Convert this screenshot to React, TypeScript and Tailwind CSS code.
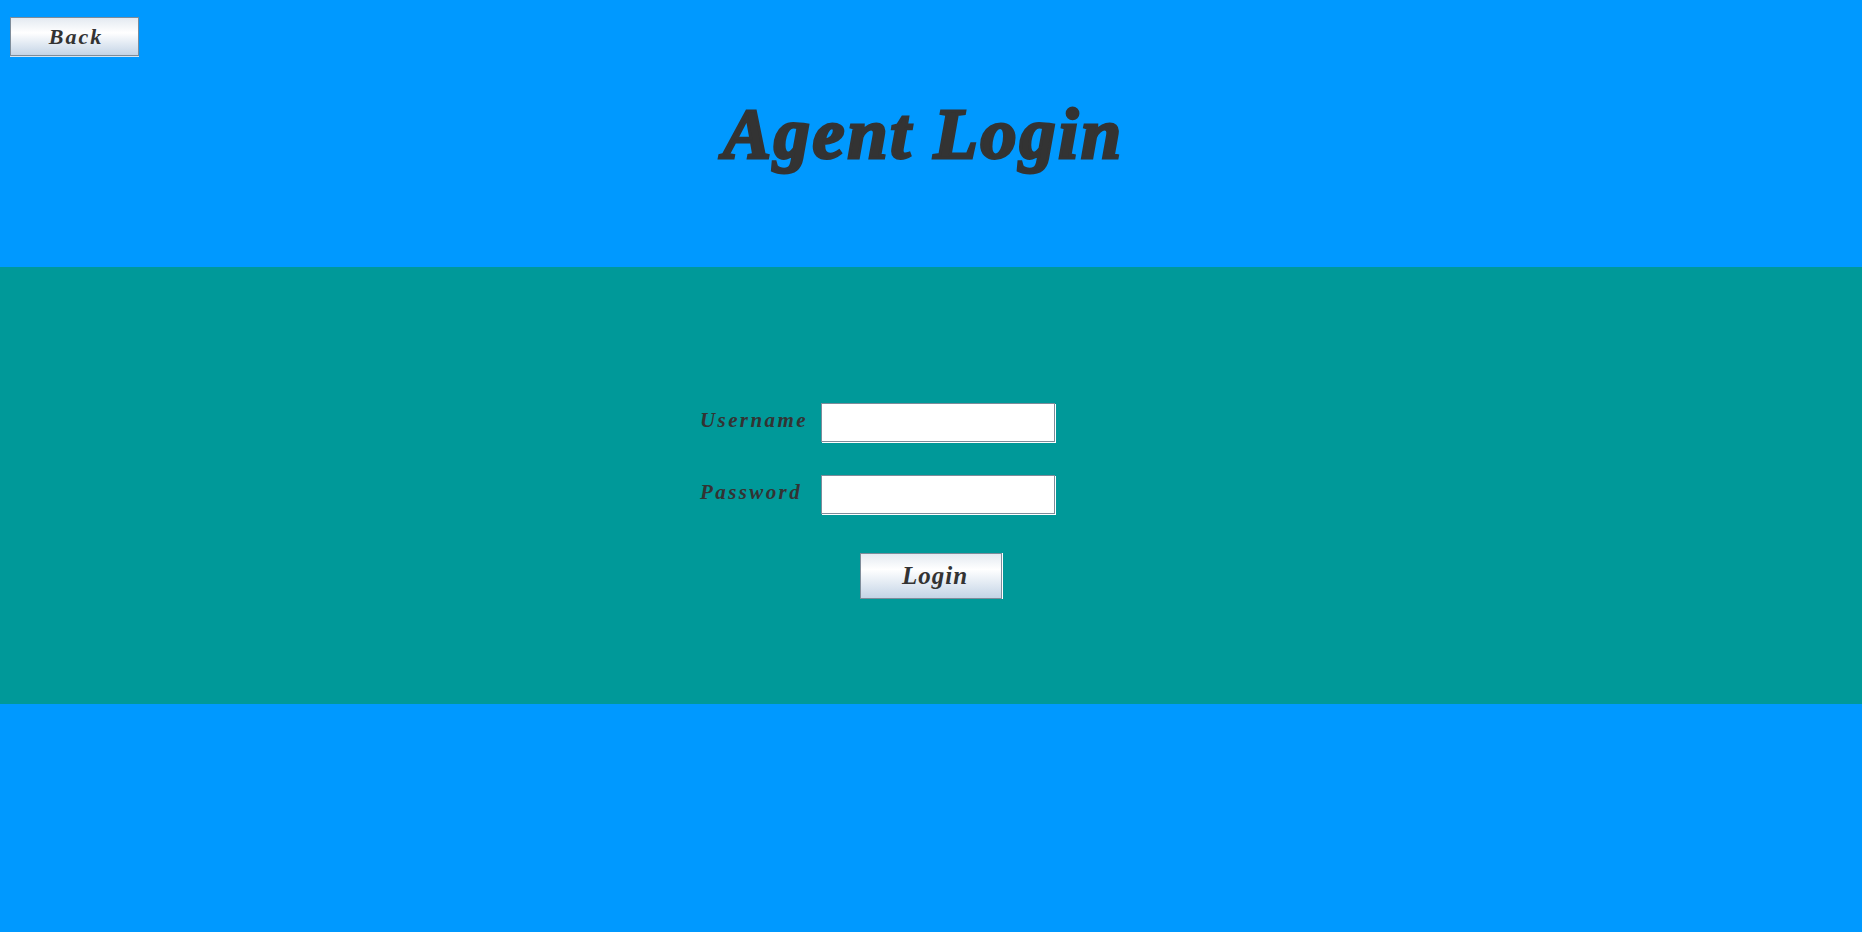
export default function App() {
  const labelClass =
    "w-[121px] pb-[4px] font-['Liberation_Serif',serif] text-[21px] font-bold italic leading-none tracking-[2.4px] text-[#333333]";
  const inputClass =
    "h-[39px] w-[234px] border border-[#7d8c9a] bg-white shadow-[1px_1px_0_#ffffff] outline-none";

  return (
    <main className="flex h-[932px] w-full flex-col overflow-hidden bg-[#0099ff]">
      <section className="h-[267px] px-[10px] pt-[17px]">
        <button className="h-[39px] w-[129px] border border-[#7d8c9a] bg-gradient-to-b from-[#e4eaf1] via-[#ffffff] via-40% to-[#c4d4e6] pl-[3px] font-['Liberation_Serif',serif] text-[22px] font-bold italic tracking-[2px] text-[#333333] shadow-[0_1px_0_#d5e3ef]">
          Back
        </button>
        <h1 className="mt-[33px] ml-[713px] font-['Liberation_Serif',serif] text-[72px] font-bold italic leading-[90px] tracking-[2.8px] whitespace-nowrap text-[#333333] [-webkit-text-stroke:3px_#333333]">
          Agent Login
        </h1>
      </section>

      <section className="h-[437px] bg-[#009999] pt-[136px] pl-[700px]">
        <div className="flex flex-col gap-[33px]">
          <div className="flex items-center">
            <label className={labelClass}>Username</label>
            <input type="text" className={inputClass} />
          </div>
          <div className="flex items-center">
            <label className={labelClass}>Password</label>
            <input type="password" className={inputClass} />
          </div>
        </div>
        <button className="mt-[39px] ml-[160px] h-[46px] w-[142px] border border-[#7d8c9a] bg-gradient-to-b from-[#e4eaf1] via-[#ffffff] via-35% to-[#c4d4e6] pl-[8px] font-['Liberation_Serif',serif] text-[25px] font-bold italic tracking-[1px] text-[#333333] shadow-[1px_0_0_#ffffff]">
          Login
        </button>
      </section>

      <section className="flex-1" />
    </main>
  );
}
